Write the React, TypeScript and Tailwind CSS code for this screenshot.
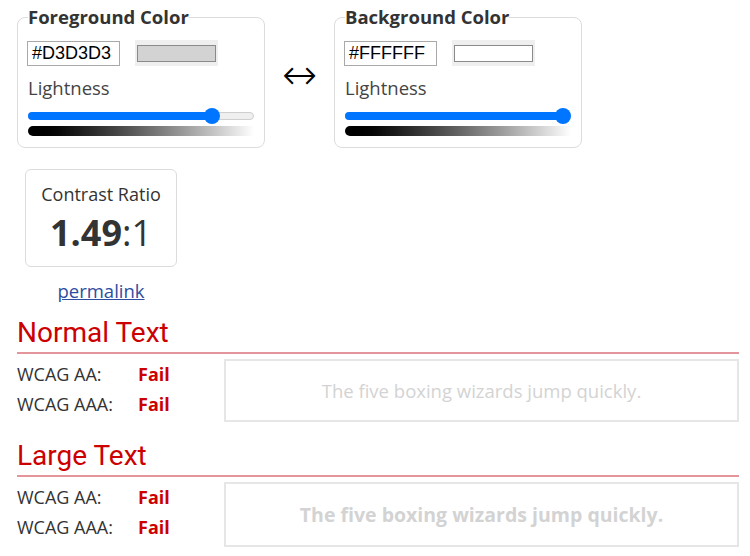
import React from "react";

const OPEN = { fontFamily: '"Open Sans", "Noto Sans", sans-serif' };

function Slider({ pct }: { pct: number }) {
  return (
    <div className="relative h-[16px] w-full">
      <div className="absolute left-0 right-0 top-[4px] h-[8px] rounded-full border border-[#cfcfcf] bg-[#efefef]" />
      <div
        className="absolute left-0 top-[4px] h-[8px] rounded-full bg-[#0075ff]"
        style={{ width: `calc(${pct} * (100% - 16px) + 8px)` }}
      />
      <div
        className="absolute top-0 h-[16px] w-[16px] rounded-full bg-[#0075ff]"
        style={{ left: `calc(${pct} * (100% - 16px))` }}
      />
    </div>
  );
}

function ColorBox({ title, hex, swatch, pct }: { title: string; hex: string; swatch: string; pct: number }) {
  return (
    <fieldset className="w-[248px] rounded-[8px] border border-[#dcdcdc] px-[10px] pb-[11px] pt-[11px]">
      <legend className="text-[18.5px] font-bold leading-[24px] text-[#333]">{title}</legend>
      <div className="flex items-center">
        <div
          className="ml-[-1px] flex h-[25px] w-[93px] items-center border border-[#a9a9a9] px-[4px] text-[18px] text-black"
          style={{ fontFamily: '"Liberation Sans", Arial, sans-serif' }}
        >
          {hex}
        </div>
        <div className="ml-[15px] flex h-[26px] w-[83px] items-center justify-center bg-[#efefef]">
          <div className="h-[17px] w-[79px] border border-[#8a8a8a]" style={{ backgroundColor: swatch }} />
        </div>
      </div>
      <div className="mt-[10px] text-[18.5px] leading-[24px] text-[#444]">Lightness</div>
      <div className="mt-[8px]">
        <Slider pct={pct} />
      </div>
      <div className="mt-[2px] h-[10px] w-full rounded-l-[5px] bg-linear-to-r from-black to-white" />
    </fieldset>
  );
}

function Section({ title, large }: { title: string; large?: boolean }) {
  return (
    <div>
      <div
        className="border-b-2 border-[#e3959b] pb-[2px] text-[28px] leading-[34px] text-[#c00]"
        style={{ fontFamily: 'Roboto, "Open Sans", sans-serif' }}
      >
        {title}
      </div>
      <div className="mt-[5px] flex">
        <div className="w-[207px] pt-[1px] text-[18px] leading-[29.5px] text-[#333]">
          <div className="flex">
            <span className="w-[121px]">WCAG AA:</span>
            <span className="font-bold text-[#c00]">Fail</span>
          </div>
          <div className="flex">
            <span className="w-[121px]">WCAG AAA:</span>
            <span className="font-bold text-[#c00]">Fail</span>
          </div>
        </div>
        <div
          className={
            "flex flex-1 items-center justify-center border-2 border-[#e6e6e6] text-[#d3d3d3] " +
            (large ? "h-[65px] text-[19.5px] font-bold" : "h-[63px] text-[18.5px]")
          }
        >
          The five boxing wizards jump quickly.
        </div>
      </div>
    </div>
  );
}

export default function App() {
  return (
    <div className="min-h-[556px] w-[750px] bg-white pl-[17px] pr-[11px] pt-[5px]" style={OPEN}>
      <div className="flex items-center">
        <ColorBox title="Foreground Color" hex="#D3D3D3" swatch="#D3D3D3" pct={0.836} />
        <div
          className="flex w-[69px] justify-center pb-[4px] text-[42px] font-extralight leading-none text-black"
          style={{ fontFamily: '"DejaVu Sans", sans-serif' }}
        >
          ↔
        </div>
        <ColorBox title="Background Color" hex="#FFFFFF" swatch="#FFFFFF" pct={1} />
      </div>

      <div className="ml-[8px] mt-[21px] w-[152px]">
        <div className="flex h-[98px] flex-col items-center rounded-[6px] border border-[#dcdcdc] pt-[12px] text-[#333]">
          <div className="text-[18px] leading-[24px]">Contrast Ratio</div>
          <div className="mt-[4px] text-[36px] leading-[46px]">
            <span className="font-bold">1.49</span>:1
          </div>
        </div>
        <div className="mt-[12px] text-center text-[18.5px] leading-[24px]">
          <a href="#" className="text-[#2d4da0] underline">permalink</a>
        </div>
      </div>

      <div className="mt-[13px]">
        <Section title="Normal Text" />
      </div>
      <div className="mt-[17px]">
        <Section title="Large Text" large />
      </div>
    </div>
  );
}
